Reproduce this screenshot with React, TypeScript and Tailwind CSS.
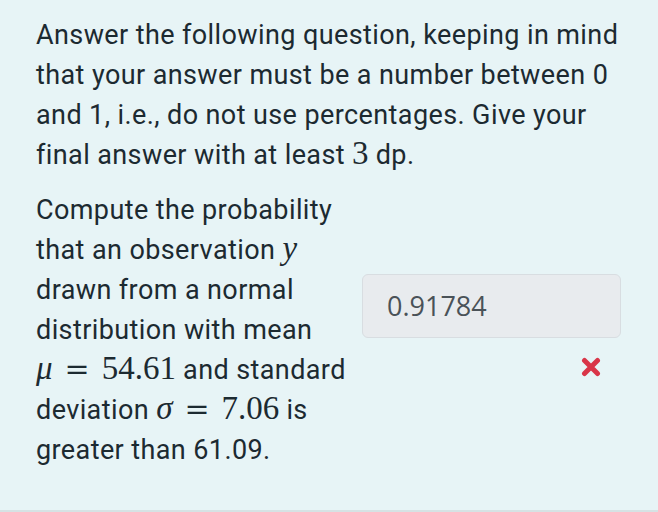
import React from "react";

const M = ({ children, italic }: { children: React.ReactNode; italic?: boolean }) => (
  <span className={`font-['Liberation_Serif',serif] text-[33px] leading-[20px] tracking-normal ${italic ? "italic" : ""}`}>{children}</span>
);

const Eq = () => (
  <span className="font-['DejaVu_Serif',serif] font-light text-[30px] leading-[20px] tracking-normal mx-[12px]">=</span>
);

export default function App() {
  return (
    <div className="w-[658px] h-[512px] bg-[#e7f4f6] border-b-2 border-[#d6e2e4] font-['Roboto',sans-serif] text-[#1c2a31] text-[27px] tracking-[0.4px] leading-[40px] pl-[36px] pt-[15px] overflow-hidden">
      <p className="w-[600px]">
        Answer the following question, keeping in mind that your answer must be a number between 0 and 1, i.e., do not use percentages. Give your final answer with at least <M>3</M> dp.
      </p>
      <div className="flex mt-[15px]">
        <p className="w-[322px] shrink-0">
          Compute the probability that an observation <M italic>y</M> drawn from a normal distribution with mean{" "}
          <span className="whitespace-nowrap"><M italic>μ</M><Eq /><M>54.61</M></span> and standard deviation{" "}
          <span className="whitespace-nowrap"><M italic>σ</M><Eq /><M>7.06</M></span> is greater than 61.09.
        </p>
        <div className="flex flex-col ml-[4px] pt-[84px]">
          <div className="w-[259px] h-[64px] rounded-[6px] bg-[#e8ebee] border border-[#d8dde1] flex items-center pl-[24px] font-['Open_Sans',sans-serif] text-[27px] tracking-normal text-[#4a5258]">
            0.91784
          </div>
          <div className="flex justify-end pr-[20px] mt-[19px]">
            <svg width="20" height="20" viewBox="0 0 20 20">
              <path d="M3.5 3.5 L16.5 16.5 M16.5 3.5 L3.5 16.5" stroke="#d93548" strokeWidth="5" strokeLinecap="round" />
            </svg>
          </div>
        </div>
      </div>
    </div>
  );
}
